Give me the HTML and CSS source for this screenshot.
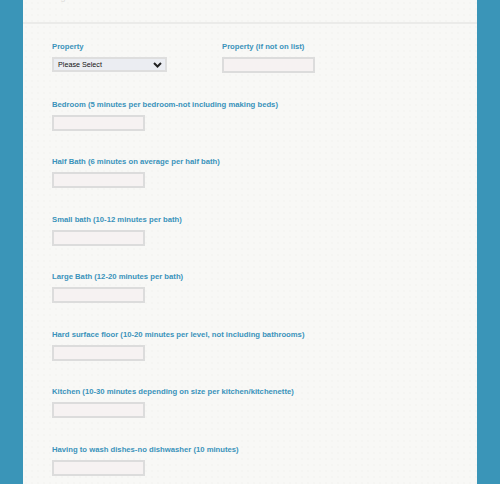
FILE: index.html
```html
<!DOCTYPE html>
<html>
<head>
<meta charset="utf-8">
<link rel="stylesheet" href="styles.css">
</head>
<body>
<div class="panel">
  <div class="header"><span class="title">Cleaning Time Calculator</span></div>
  <div class="form">
    <div class="row">
      <div class="field col1">
        <label class="label">Property</label>
        <div class="select"><span>Please Select</span>
          <svg class="chev" width="9" height="6" viewBox="0 0 9 6"><path d="M1 1 L4.5 4.5 L8 1" fill="none" stroke="#222" stroke-width="2"/></svg>
        </div>
      </div>
      <div class="field">
        <label class="label">Property (if not on list)</label>
        <div class="input"></div>
      </div>
    </div>
    <div class="field"><label class="label">Bedroom (5 minutes per bedroom-not including making beds)</label><div class="input"></div></div>
    <div class="field"><label class="label">Half Bath (6 minutes on average per half bath)</label><div class="input"></div></div>
    <div class="field"><label class="label">Small bath (10-12 minutes per bath)</label><div class="input"></div></div>
    <div class="field"><label class="label">Large Bath (12-20 minutes per bath)</label><div class="input"></div></div>
    <div class="field"><label class="label">Hard surface floor (10-20 minutes per level, not including bathrooms)</label><div class="input"></div></div>
    <div class="field"><label class="label">Kitchen (10-30 minutes depending on size per kitchen/kitchenette)</label><div class="input"></div></div>
    <div class="field"><label class="label">Having to wash dishes-no dishwasher (10 minutes)</label><div class="input"></div></div>
  </div>
</div>
</body>
</html>
```
FILE: styles.css
```css
html, body {
  margin: 0;
  padding: 0;
  height: 484px;
  overflow: hidden;
  background: #3a95b8;
  font-family: "Liberation Sans", Arial, sans-serif;
}
.panel {
  margin: 0 23px;
  height: 484px;
  background-color: #f8f8f6;
  background-image: radial-gradient(#f1f1ee 0.6px, transparent 0.8px);
  background-size: 6px 6px;
}
.header {
  height: 22px;
  border-bottom: 2px solid #ebebe9;
  overflow: hidden;
}
.title {
  display: block;
  margin-top: -7px;
  padding-left: 7px;
  font-size: 9px;
  line-height: 9px;
  color: #dcdcda;
}
.form {
  padding: 17px 0 0 29px;
}
.row {
  display: flex;
}
.col1 {
  width: 170px;
}
.field {
  height: 57.5px;
}
.label {
  display: block;
  font-weight: bold;
  font-size: 7.7px;
  line-height: 11px;
  color: #3a93bb;
  margin-bottom: 5px;
}
.input {
  width: 89px;
  height: 12px;
  border: 2px solid #dcdcdc;
  background: #f6f2f2;
}
.select {
  box-sizing: border-box;
  width: 115px;
  height: 15px;
  border: 2px solid #dedede;
  background-color: #ebedf2;
  display: flex;
  align-items: center;
  justify-content: space-between;
  padding: 0 3px 0 4px;
  font-size: 7.2px;
  color: #111;
}
.chev {
  display: block;
}
```
